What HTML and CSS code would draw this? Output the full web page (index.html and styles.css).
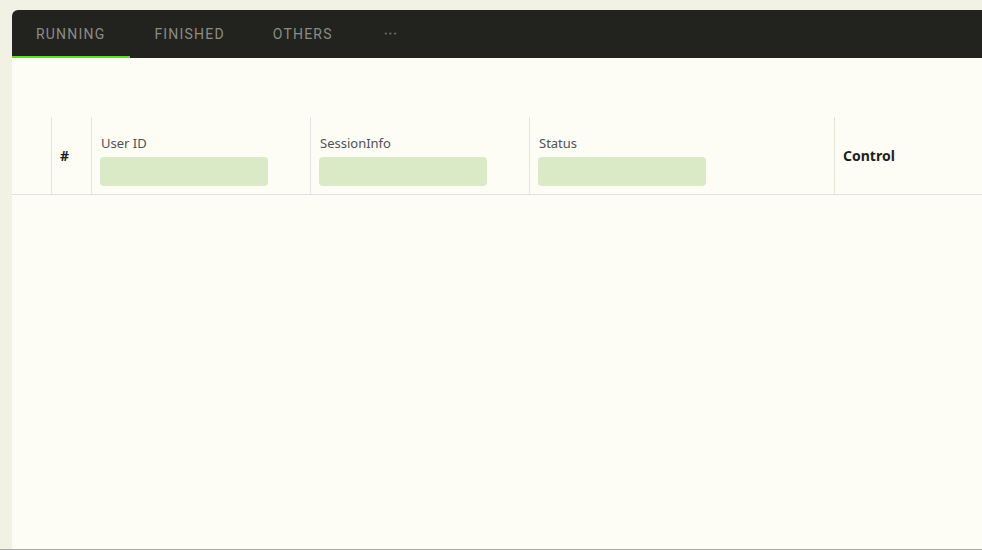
FILE: index.html
```html
<!DOCTYPE html>
<html>
<head>
<meta charset="utf-8">
<link rel="stylesheet" href="styles.css">
</head>
<body>
<div class="page">
  <div class="card">
    <div class="tabbar">
      <div class="tab active">Running</div>
      <div class="tab">Finished</div>
      <div class="tab">Others</div>
      <div class="tab more">•••</div>
    </div>
    <div class="content">
      <div class="thead">
        <div class="cell c-blank"></div>
        <div class="cell c-num"><span class="bold">#</span></div>
        <div class="cell c-filter">
          <div class="label">User ID</div>
          <div class="skeleton"></div>
        </div>
        <div class="cell c-filter">
          <div class="label">SessionInfo</div>
          <div class="skeleton"></div>
        </div>
        <div class="cell c-status">
          <div class="label">Status</div>
          <div class="skeleton"></div>
        </div>
        <div class="cell c-control"><span class="bold">Control</span></div>
      </div>
    </div>
  </div>
</div>
</body>
</html>
```
FILE: styles.css
```css
* { box-sizing: border-box; }
html, body {
  margin: 0;
  padding: 0;
  height: 100%;
}
body {
  background: #f1f1e4;
  font-family: "Noto Sans", "Liberation Sans", sans-serif;
  overflow: hidden;
}
.page {
  height: 550px;
  padding: 10px 0 0 12px;
  border-bottom: 1px solid #a8a8a8;
}
.card {
  height: 100%;
  background: #fdfdf6;
  border-top-left-radius: 6px;
  overflow: hidden;
}
.tabbar {
  height: 48px;
  background: #22221e;
  display: flex;
  align-items: stretch;
}
.tab {
  font-family: Roboto, "Noto Sans", sans-serif;
  font-size: 14px;
  letter-spacing: 1.2px;
  text-transform: uppercase;
  color: #8c8c86;
  padding: 0 24px;
  display: flex;
  align-items: center;
  border-bottom: 2px solid transparent;
  padding-top: 2px;
}
.tab.active {
  border-bottom-color: #5fdc2c;
  padding-right: 25px;
}
.tab.more {
  font-family: "DejaVu Sans", sans-serif;
  font-size: 7px;
  letter-spacing: 0.5px;
  color: #6f6f68;
  padding-left: 27px;
}
.content {
  padding-top: 59px;
}
.thead {
  display: flex;
  height: 78px;
  border-bottom: 1px solid #e0e0e6;
}
.cell {
  border-left: 1px solid #e4e4e4;
  padding: 17px 8px 8px 8px;
}
.c-blank {
  width: 39px;
  border-left: none;
}
.c-num {
  width: 40px;
  display: flex;
  align-items: center;
  padding-top: 0;
  padding-bottom: 0;
}
.c-filter { width: 219px; }
.c-status { width: 305px; }
.c-control {
  flex: 1;
  display: flex;
  align-items: center;
  padding-top: 0;
  padding-bottom: 0;
  border-left-color: #e6e6d6;
}
.bold {
  font-weight: 700;
  font-size: 14px;
  color: #1e1e22;
}
.label {
  font-size: 13px;
  line-height: 18px;
  color: #505056;
  margin-bottom: 5px;
  padding-left: 1px;
}
.skeleton {
  width: 168px;
  height: 29px;
  border-radius: 4px;
  background: #dbeac6;
}
```
